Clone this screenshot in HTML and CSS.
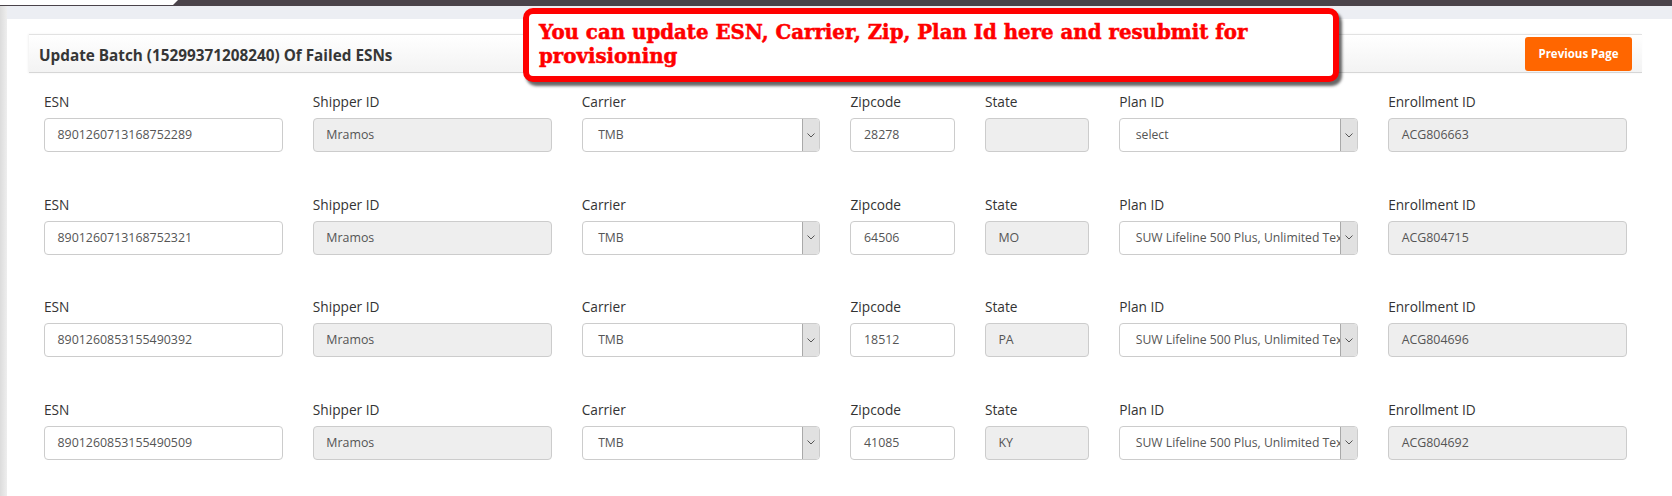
FILE: index.html
```
<!DOCTYPE html>
<html lang="en">
<head>
<meta charset="utf-8">
<title>Update Batch</title>
<link rel="stylesheet" href="styles.css">
</head>
<body>
<div class="topbar"><div class="tab"></div></div>
<div class="layout">
  <div class="edge"></div>
  <div class="main">
    <div class="band"></div>
    <div class="content">
      <div class="panel">
        <div class="panel-heading">
          <h1 class="panel-title">Update Batch (15299371208240) Of Failed ESNs</h1>
          <button class="btn-prev" type="button">Previous Page</button>
        </div>
        <div class="panel-body">

          <div class="form-row">
            <div class="col col-2"><label class="lbl">ESN</label><div class="input">8901260713168752289</div></div>
            <div class="col col-2"><label class="lbl">Shipper ID</label><div class="input ro">Mramos</div></div>
            <div class="col col-2"><label class="lbl">Carrier</label><div class="select"><span class="val">TMB</span><span class="arrow"><svg viewBox="0 0 8 5" width="8" height="5"><path d="M0.5 0.5 L4 4 L7.5 0.5" fill="none" stroke="#555" stroke-width="1"/></svg></span></div></div>
            <div class="col col-1"><label class="lbl">Zipcode</label><div class="input">28278</div></div>
            <div class="col col-1"><label class="lbl">State</label><div class="input ro"></div></div>
            <div class="col col-2"><label class="lbl">Plan ID</label><div class="select"><span class="val">select</span><span class="arrow"><svg viewBox="0 0 8 5" width="8" height="5"><path d="M0.5 0.5 L4 4 L7.5 0.5" fill="none" stroke="#555" stroke-width="1"/></svg></span></div></div>
            <div class="col col-2"><label class="lbl">Enrollment ID</label><div class="input ro">ACG806663</div></div>
          </div>

          <div class="form-row">
            <div class="col col-2"><label class="lbl">ESN</label><div class="input">8901260713168752321</div></div>
            <div class="col col-2"><label class="lbl">Shipper ID</label><div class="input ro">Mramos</div></div>
            <div class="col col-2"><label class="lbl">Carrier</label><div class="select"><span class="val">TMB</span><span class="arrow"><svg viewBox="0 0 8 5" width="8" height="5"><path d="M0.5 0.5 L4 4 L7.5 0.5" fill="none" stroke="#555" stroke-width="1"/></svg></span></div></div>
            <div class="col col-1"><label class="lbl">Zipcode</label><div class="input">64506</div></div>
            <div class="col col-1"><label class="lbl">State</label><div class="input ro">MO</div></div>
            <div class="col col-2"><label class="lbl">Plan ID</label><div class="select"><span class="val">SUW Lifeline 500 Plus, Unlimited Tex</span><span class="arrow"><svg viewBox="0 0 8 5" width="8" height="5"><path d="M0.5 0.5 L4 4 L7.5 0.5" fill="none" stroke="#555" stroke-width="1"/></svg></span></div></div>
            <div class="col col-2"><label class="lbl">Enrollment ID</label><div class="input ro">ACG804715</div></div>
          </div>

          <div class="form-row">
            <div class="col col-2"><label class="lbl">ESN</label><div class="input">8901260853155490392</div></div>
            <div class="col col-2"><label class="lbl">Shipper ID</label><div class="input ro">Mramos</div></div>
            <div class="col col-2"><label class="lbl">Carrier</label><div class="select"><span class="val">TMB</span><span class="arrow"><svg viewBox="0 0 8 5" width="8" height="5"><path d="M0.5 0.5 L4 4 L7.5 0.5" fill="none" stroke="#555" stroke-width="1"/></svg></span></div></div>
            <div class="col col-1"><label class="lbl">Zipcode</label><div class="input">18512</div></div>
            <div class="col col-1"><label class="lbl">State</label><div class="input ro">PA</div></div>
            <div class="col col-2"><label class="lbl">Plan ID</label><div class="select"><span class="val">SUW Lifeline 500 Plus, Unlimited Tex</span><span class="arrow"><svg viewBox="0 0 8 5" width="8" height="5"><path d="M0.5 0.5 L4 4 L7.5 0.5" fill="none" stroke="#555" stroke-width="1"/></svg></span></div></div>
            <div class="col col-2"><label class="lbl">Enrollment ID</label><div class="input ro">ACG804696</div></div>
          </div>

          <div class="form-row">
            <div class="col col-2"><label class="lbl">ESN</label><div class="input">8901260853155490509</div></div>
            <div class="col col-2"><label class="lbl">Shipper ID</label><div class="input ro">Mramos</div></div>
            <div class="col col-2"><label class="lbl">Carrier</label><div class="select"><span class="val">TMB</span><span class="arrow"><svg viewBox="0 0 8 5" width="8" height="5"><path d="M0.5 0.5 L4 4 L7.5 0.5" fill="none" stroke="#555" stroke-width="1"/></svg></span></div></div>
            <div class="col col-1"><label class="lbl">Zipcode</label><div class="input">41085</div></div>
            <div class="col col-1"><label class="lbl">State</label><div class="input ro">KY</div></div>
            <div class="col col-2"><label class="lbl">Plan ID</label><div class="select"><span class="val">SUW Lifeline 500 Plus, Unlimited Tex</span><span class="arrow"><svg viewBox="0 0 8 5" width="8" height="5"><path d="M0.5 0.5 L4 4 L7.5 0.5" fill="none" stroke="#555" stroke-width="1"/></svg></span></div></div>
            <div class="col col-2"><label class="lbl">Enrollment ID</label><div class="input ro">ACG804692</div></div>
          </div>

        </div>
      </div>
    </div>
  </div>
</div>
<div class="callout">You can update ESN, Carrier, Zip, Plan Id here and resubmit for provisioning</div>
</body>
</html>
```
FILE: styles.css
```
* { box-sizing: border-box; }
html, body { margin: 0; padding: 0; }
body {
  background: #fff;
  font-family: "Open Sans", "Noto Sans", sans-serif;
  color: #333;
  width: 1672px;
  height: 496px;
  overflow: hidden;
  position: relative;
}

.topbar {
  height: 6px;
  background: #4a434a;
}
.tab {
  width: 178px;
  height: 5px;
  background: #fff;
  clip-path: polygon(0 0, 178px 0, 173px 100%, 0 100%);
}

.layout { display: flex; }
.edge {
  width: 7px;
  flex: none;
  height: 490px;
  background: linear-gradient(to right, #dcdcdc, #eeeeee);
}
.main { flex: 1; }
.band { height: 13px; background: #eceef3; }
.content { padding: 15px 30px 0 22px; }

.panel { background: #fff; }
.panel-heading {
  height: 39px;
  display: flex;
  justify-content: space-between;
  align-items: center;
  padding: 0 10px;
  border-top: 1px solid #e2e2e2;
  border-bottom: 1px solid #d6d6d6;
  background: linear-gradient(#ffffff, #f3f3f3);
  box-shadow: -1px 0 2px rgba(0,0,0,0.06);
}
.panel-title {
  margin: 0;
  padding-top: 3px;
  font-size: 15.3px;
  line-height: 20px;
  font-weight: 700;
  color: #363636;
}
.btn-prev {
  height: 34px;
  width: 107px;
  padding: 0;
  border: 0;
  border-radius: 3px;
  background: #ff6600;
  color: #fff;
  font-family: "Open Sans", sans-serif;
  font-size: 11.5px;
  font-weight: 700;
}

.panel-body { padding-top: 19px; }
.form-row { display: flex; margin-bottom: 42.5px; }
.col { padding: 0 15px; }
.col-2 { width: 16.6667%; }
.col-1 { width: 8.3333%; }

.lbl {
  display: block;
  font-size: 13.7px;
  line-height: 20px;
  margin-bottom: 6px;
  color: #333;
}
.input, .select {
  height: 34px;
  border: 1px solid #cccccc;
  border-radius: 4px;
  background: #fff;
  font-size: 12.4px;
  color: #555;
  line-height: 32px;
  white-space: nowrap;
}
.input { padding: 0 12.5px; }
.input.ro { background: #eeeeee; }
.select {
  position: relative;
  overflow: hidden;
  padding-left: 15.5px;
}
.select .val {
  display: block;
  font-size: 12.2px;
}
.select .arrow {
  position: absolute;
  top: 0;
  right: 0;
  bottom: 0;
  width: 17px;
  background: #e1e1e1;
  border-left: 1px solid #a9a9a9;
  display: flex;
  align-items: center;
  justify-content: center;
}
.select .arrow svg { display: block; }

.callout {
  position: absolute;
  left: 523px;
  top: 8px;
  width: 816px;
  height: 74px;
  border: 6px solid #ff0000;
  border-radius: 10px;
  background: #fff;
  box-shadow: 3px 4px 3px rgba(0,0,0,0.6);
  padding: 6px 10px 0 10px;
  font-family: "DejaVu Serif", "Liberation Serif", serif;
  font-weight: 700;
  font-size: 19.8px;
  line-height: 24px;
  color: #ff0000;
  -webkit-text-stroke: 0.5px #ff0000;
}
```
